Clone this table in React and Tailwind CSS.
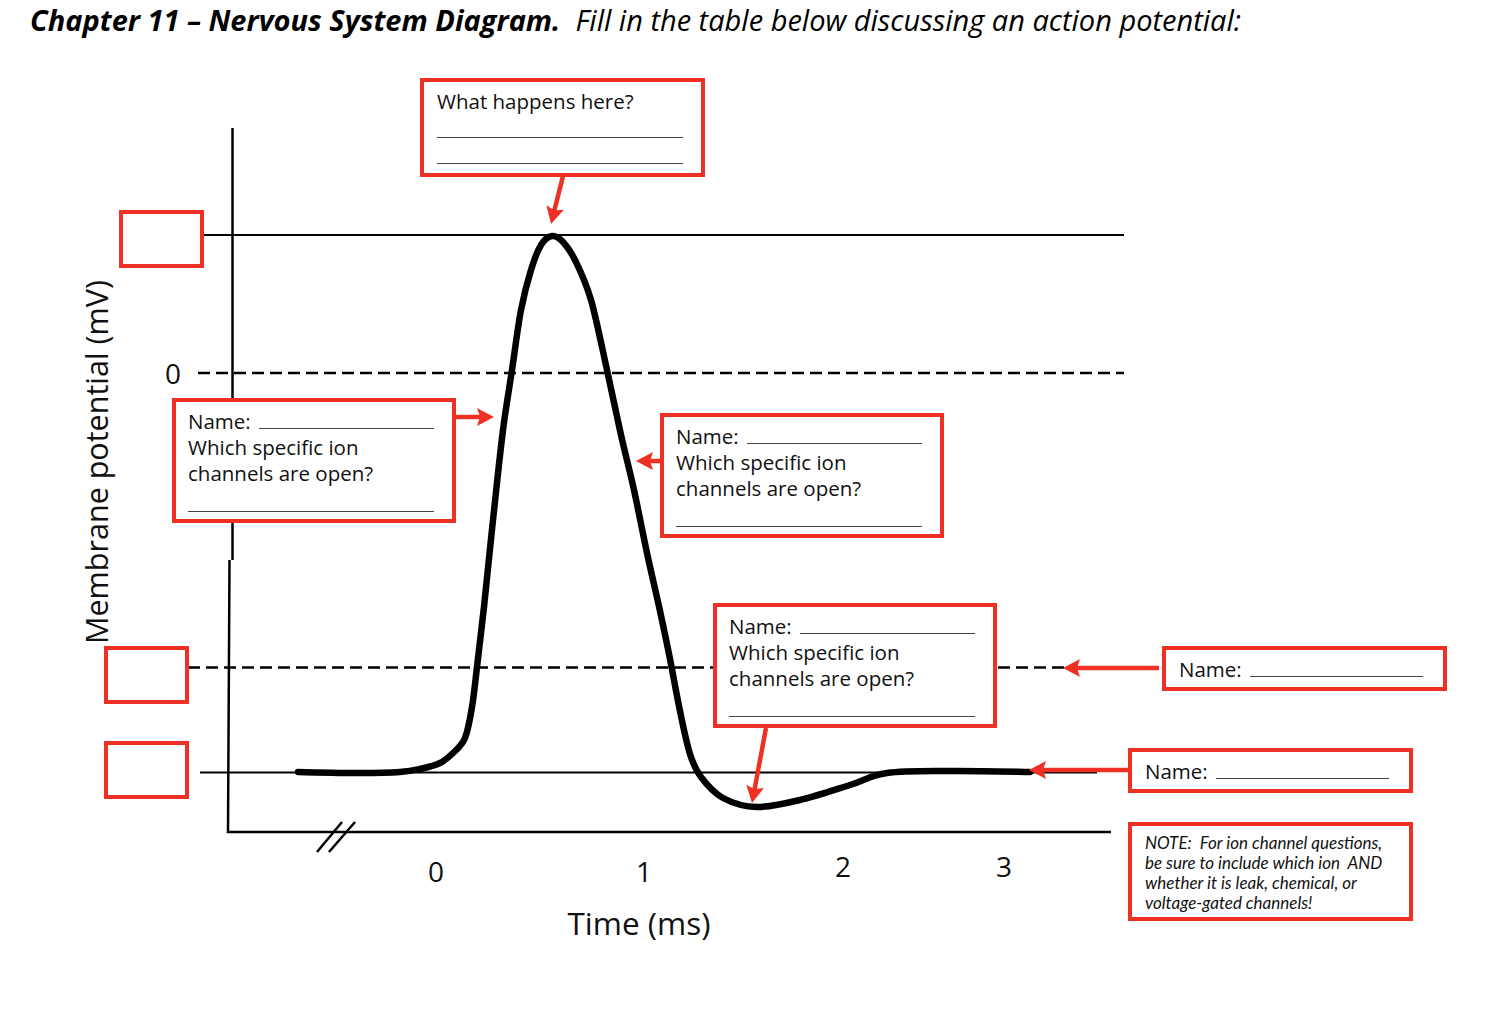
import React from "react";

const RED = "#ee3124";

function smoothPath(pts) {
  let d = `M${pts[0][0]} ${pts[0][1]}`;
  for (let i = 0; i < pts.length - 1; i++) {
    const p0 = pts[i - 1] || pts[i];
    const p1 = pts[i];
    const p2 = pts[i + 1];
    const p3 = pts[i + 2] || p2;
    const c1x = p1[0] + (p2[0] - p0[0]) / 6;
    const c1y = p1[1] + (p2[1] - p0[1]) / 6;
    const c2x = p2[0] - (p3[0] - p1[0]) / 6;
    const c2y = p2[1] - (p3[1] - p1[1]) / 6;
    d += ` C${c1x.toFixed(1)} ${c1y.toFixed(1)} ${c2x.toFixed(1)} ${c2y.toFixed(1)} ${p2[0]} ${p2[1]}`;
  }
  return d;
}

const curvePts = [
  [298, 772], [360, 773], [400, 772], [420, 769], [440, 763], [453, 753],
  [465, 738], [472, 707], [477, 667], [484, 607], [493, 520], [503, 430],
  [512, 370], [521, 310], [531, 270], [541, 245], [552, 236], [563, 242],
  [576, 262], [591, 300], [607, 370], [621, 435], [634, 490], [647, 553],
  [660, 611], [670, 659], [680, 711], [690, 754], [701, 777], [723, 798],
  [757, 807], [800, 800], [850, 785], [887, 773], [950, 771], [1030, 772],
];

function Arrow({ x1, y1, x2, y2, head = 17, half = 9 }) {
  const dx = x2 - x1;
  const dy = y2 - y1;
  const len = Math.hypot(dx, dy);
  const ux = dx / len;
  const uy = dy / len;
  const bx = x2 - ux * head;
  const by = y2 - uy * head;
  const px = -uy;
  const py = ux;
  const pts = `${x2},${y2} ${bx + px * half},${by + py * half} ${bx + ux * 3},${by + uy * 3} ${bx - px * half},${by - py * half}`;
  return (
    <g>
      <line x1={x1} y1={y1} x2={bx + ux * 4} y2={by + uy * 4} stroke={RED} strokeWidth="4.5" />
      <polygon points={pts} fill={RED} />
    </g>
  );
}

function Box({ left, top, w, h, children, className = "" }) {
  return (
    <div
      className={`absolute border-[4px] border-[#ee3124] bg-white ${className}`}
      style={{ left, top, width: w, height: h }}
    >
      {children}
    </div>
  );
}

function NameRow() {
  return (
    <div className="flex items-baseline">
      <span>Name:</span>
      <span className="ml-[8px] flex-1 border-b border-[#444]"></span>
    </div>
  );
}

function ChannelBox({ left, top }) {
  return (
    <Box left={left} top={top} w={284} h={125} className="pl-[12px] pr-[18px] pt-[6px]">
      <div className="text-[20.5px] leading-[26px] text-[#111] font-['Open_Sans',sans-serif]">
        <NameRow />
        <div>Which specific ion</div>
        <div>channels are open?</div>
        <div className="mt-[25px] border-b border-[#444]"></div>
      </div>
    </Box>
  );
}

function Label({ x, y, children, className = "" }) {
  return (
    <div
      className={`absolute -translate-x-1/2 -translate-y-1/2 whitespace-nowrap font-['Open_Sans',sans-serif] text-[#111] ${className}`}
      style={{ left: x, top: y }}
    >
      {children}
    </div>
  );
}

export default function App() {
  return (
    <div className="relative w-[1498px] h-[1014px] bg-white overflow-hidden">
      <div className="absolute left-[30px] top-[0px] whitespace-nowrap text-[29px] leading-[40px] italic text-black font-['Open_Sans',sans-serif]">
        <span className="font-bold">Chapter 11 – Nervous System Diagram.</span>
        <span>&nbsp; Fill in the table below discussing an action potential:</span>
      </div>

      <svg className="absolute left-0 top-0" width="1498" height="1014" viewBox="0 0 1498 1014">
        {/* axes */}
        <path d="M232.5 128 L232.5 560 M229.5 560 L228 832 L1111 832" fill="none" stroke="#000" strokeWidth="2.5" />
        {/* top peak line */}
        <line x1="203" y1="235" x2="1124" y2="235" stroke="#000" strokeWidth="2.2" />
        {/* zero dashed */}
        <line x1="198" y1="373" x2="1124" y2="373" stroke="#000" strokeWidth="2.6" strokeDasharray="12 6" />
        {/* threshold dashed */}
        <line x1="188" y1="667.5" x2="1124" y2="667.5" stroke="#000" strokeWidth="2.6" strokeDasharray="12 6" />
        {/* resting line */}
        <line x1="200" y1="772.5" x2="1097" y2="772.5" stroke="#000" strokeWidth="2.2" />
        {/* axis break */}
        <line x1="317" y1="852" x2="342" y2="822" stroke="#000" strokeWidth="2.5" />
        <line x1="329" y1="852" x2="355" y2="822" stroke="#000" strokeWidth="2.5" />
        {/* action potential curve */}
        <path d={smoothPath(curvePts)} fill="none" stroke="#000" strokeWidth="6.5" strokeLinecap="round" strokeLinejoin="round" />
      </svg>

      {/* boxes */}
      <Box left={420} top={78} w={285} h={99} className="pl-[13px] pr-[18px] pt-[6px]">
        <div className="text-[20.5px] leading-[26px] text-[#111] font-['Open_Sans',sans-serif]">
          <div>What happens here?</div>
          <div className="mt-[23px] border-b border-[#444]"></div>
          <div className="mt-[25px] border-b border-[#444]"></div>
        </div>
      </Box>

      <Box left={119} top={210} w={85} h={58} />
      <Box left={104} top={646} w={85} h={58} />
      <Box left={104} top={741} w={85} h={58} />

      <ChannelBox left={172} top={398} />
      <ChannelBox left={660} top={413} />
      <ChannelBox left={713} top={603} />

      <Box left={1162} top={646} w={285} h={45} className="pl-[13px] pr-[20px] pt-[6px]">
        <div className="text-[20.5px] leading-[26px] text-[#111] font-['Open_Sans',sans-serif]">
          <NameRow />
        </div>
      </Box>
      <Box left={1128} top={748} w={285} h={45} className="pl-[13px] pr-[20px] pt-[6px]">
        <div className="text-[20.5px] leading-[26px] text-[#111] font-['Open_Sans',sans-serif]">
          <NameRow />
        </div>
      </Box>
      <Box left={1128} top={822} w={285} h={99} className="pl-[13px] pr-[4px] pt-[7px]">
        <div className="text-[17px] leading-[20px] italic text-[#111] font-['Lato',sans-serif] whitespace-nowrap">
          <div>NOTE:&nbsp; For ion channel questions,</div>
          <div>be sure to include which ion&nbsp; AND</div>
          <div>whether it is leak, chemical, or</div>
          <div>voltage-gated channels!</div>
        </div>
      </Box>

      {/* arrows */}
      <svg className="absolute left-0 top-0 pointer-events-none" width="1498" height="1014" viewBox="0 0 1498 1014">
        <Arrow x1={563} y1={176} x2={551} y2={224} />
        <Arrow x1={456} y1={417} x2={494} y2={417} />
        <Arrow x1={660} y1={461} x2={636} y2={461} />
        <Arrow x1={766} y1={728} x2={752} y2={803} />
        <Arrow x1={1159} y1={668} x2={1063} y2={668} />
        <Arrow x1={1128} y1={770} x2={1029} y2={770} />
      </svg>

      {/* labels */}
      <Label x={173} y={373} className="text-[28px]">0</Label>
      <Label x={436} y={871} className="text-[28px]">0</Label>
      <Label x={644} y={871} className="text-[28px]">1</Label>
      <Label x={843} y={866} className="text-[28px]">2</Label>
      <Label x={1004} y={866} className="text-[28px]">3</Label>
      <Label x={639} y={923} className="text-[31.5px]">Time (ms)</Label>
      <Label x={97} y={462} className="text-[30.5px] -rotate-90">Membrane potential (mV)</Label>
    </div>
  );
}
